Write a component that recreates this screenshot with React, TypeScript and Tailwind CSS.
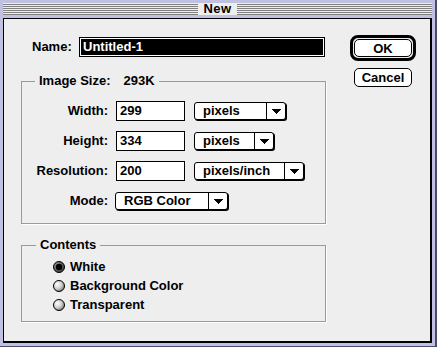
import React from "react";

function Arrow() {
  return (
    <svg width="9" height="5" viewBox="0 0 9 5" shapeRendering="crispEdges">
      <polygon points="0,0 9,0 4.5,5" fill="#000" />
    </svg>
  );
}

function Popup({ label, className }: { label: string; className: string }) {
  return (
    <div
      className={`mt-[1px] flex h-[18px] rounded-[3px] border border-black bg-white shadow-[1px_1px_0_#000] ${className}`}
    >
      <span className="flex-1 pl-[8px] text-[13px] leading-[16px]">{label}</span>
      <span className="flex w-[19px] items-center justify-center border-l border-black">
        <Arrow />
      </span>
    </div>
  );
}

function Radio({ checked }: { checked?: boolean }) {
  return (
    <svg width="12" height="12" viewBox="0 0 12 12">
      <defs>
        <radialGradient id="rg" cx="35%" cy="35%" r="70%">
          <stop offset="0%" stopColor="#ffffff" />
          <stop offset="55%" stopColor="#cfcfcf" />
          <stop offset="100%" stopColor="#777777" />
        </radialGradient>
        <radialGradient id="rgc" cx="35%" cy="35%" r="70%">
          <stop offset="0%" stopColor="#9a9a9a" />
          <stop offset="100%" stopColor="#3a3a3a" />
        </radialGradient>
      </defs>
      <circle cx="6" cy="6" r="5.5" fill={checked ? "url(#rgc)" : "url(#rg)"} stroke="#000" strokeWidth="1" />
      {checked && <circle cx="6" cy="6" r="3.2" fill="#000" />}
    </svg>
  );
}

function Row({ label, value, popup }: { label: string; value: string; popup: React.ReactNode }) {
  return (
    <div className="flex h-[20px] items-start">
      <span className="w-[86px] text-right leading-[20px]">{label}</span>
      <div className="ml-[8px] h-[20px] w-[69px] border border-black bg-white pl-[3px] leading-[18px]">{value}</div>
      <div className="ml-[9px]">{popup}</div>
    </div>
  );
}

export default function App() {
  return (
    <div className="flex h-[347px] w-[437px] flex-col border-b border-r-2 border-[#4a4a6a] bg-[#c0c0e0] pb-[3px] pl-[3px] pr-[3px] font-['Liberation_Sans',Arial,sans-serif] text-[13px] font-bold text-black">
      {/* Title bar */}
      <div className="flex h-[18px] shrink-0 py-[3px]">
        <div className="h-[12px] flex-1 bg-[repeating-linear-gradient(to_bottom,#eeeeee_0px,#eeeeee_1px,#808080_1px,#808080_2px)]" />
        <div className="flex h-[12px] w-[39px] items-center justify-center bg-[#eeeeee] leading-[12px] tracking-[0.5px]">New</div>
        <div className="h-[12px] flex-1 bg-[repeating-linear-gradient(to_bottom,#eeeeee_0px,#eeeeee_1px,#808080_1px,#808080_2px)]" />
      </div>

      {/* Body */}
      <div className="flex flex-1 border-b-2 border-l border-r-2 border-t border-black bg-[#eeeeee] pl-[17px] pt-[16px]">
        {/* Left column */}
        <div className="mt-[2px] flex w-[305px] flex-col">
          <div className="flex h-[20px] items-center pl-[11px]">
            <span className="w-[47px]">Name:</span>
            <div className="h-[20px] w-[246px] border border-black bg-white p-[1px]">
              <div className="h-full bg-black pl-[2px] leading-[16px] text-white">Untitled-1</div>
            </div>
          </div>

          <div className="relative mt-[24px] h-[143px] border border-[#9a9a9a] pt-[19px] shadow-[1px_1px_0_#ffffff]">
            <span className="absolute left-[13px] top-[-9px] flex bg-[#eeeeee] px-[4px] leading-[16px]">
              <span>Image Size:</span>
              <span className="ml-[13px]">293K</span>
            </span>
            <div className="flex flex-col gap-[10px]">
              <Row label="Width:" value="299" popup={<Popup label="pixels" className="w-[92px]" />} />
              <Row label="Height:" value="334" popup={<Popup label="pixels" className="w-[80px]" />} />
              <Row label="Resolution:" value="200" popup={<Popup label="pixels/inch" className="w-[110px]" />} />
              <div className="flex h-[20px] items-start">
                <span className="w-[86px] text-right leading-[20px]">Mode:</span>
                <div className="ml-[7px]">
                  <Popup label="RGB Color" className="w-[113px]" />
                </div>
              </div>
            </div>
          </div>

          <div className="relative mt-[21px] h-[77px] border border-[#9a9a9a] pl-[31px] pt-[11px] shadow-[1px_1px_0_#ffffff]">
            <span className="absolute left-[14px] top-[-9px] bg-[#eeeeee] px-[4px] leading-[16px]">Contents</span>
            <div className="flex h-[19px] items-center gap-[5px]">
              <Radio checked />
              <span>White</span>
            </div>
            <div className="flex h-[19px] items-center gap-[5px]">
              <Radio />
              <span>Background Color</span>
            </div>
            <div className="flex h-[19px] items-center gap-[5px]">
              <Radio />
              <span>Transparent</span>
            </div>
          </div>
        </div>

        {/* Right column */}
        <div className="ml-[24px] flex flex-col items-start">
          <div className="flex h-[26px] w-[66px] rounded-[8px] border-[3px] border-black p-[1px]">
            <div className="flex flex-1 items-center justify-center rounded-[5px] border border-black bg-white leading-none">
              OK
            </div>
          </div>
          <div className="ml-[4px] mt-[7px] flex h-[19px] w-[58px] items-center justify-center rounded-[5px] border border-black bg-white leading-none">
            Cancel
          </div>
        </div>
      </div>
    </div>
  );
}
